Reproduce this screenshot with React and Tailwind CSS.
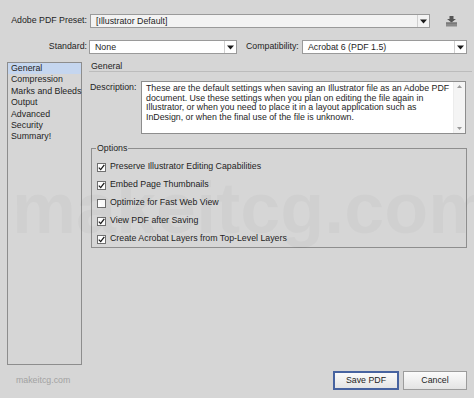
import React from "react";

const options = [
  { label: "Preserve Illustrator Editing Capabilities", checked: true },
  { label: "Embed Page Thumbnails", checked: true },
  { label: "Optimize for Fast Web View", checked: false },
  { label: "View PDF after Saving", checked: true },
  { label: "Create Acrobat Layers from Top-Level Layers", checked: true },
];

const sections = ["General", "Compression", "Marks and Bleeds", "Output", "Advanced", "Security", "Summary!"];

const description = [
  "These are the default settings when saving an Illustrator file as an Adobe PDF",
  "document. Use these settings when you plan on editing the file again in",
  "Illustrator, or when you need to place it in a layout application such as",
  "InDesign, or when the final use of the file is unknown.",
];

function Arrow() {
  return (
    <svg width="7" height="5" viewBox="0 0 7 5">
      <path d="M0 0.5 H7 L3.5 4.5 Z" fill="#1a1a1a" />
    </svg>
  );
}

function Select({ value, className, tone = "bg-white" }) {
  return (
    <div className={`flex h-[14px] items-stretch border border-[#9a9a9a] ${tone} ${className}`}>
      <span className="flex-1 pl-[5px] leading-[12px]">{value}</span>
      <span className="flex w-[12px] items-center justify-center border-l border-[#d0d0d0]">
        <Arrow />
      </span>
    </div>
  );
}

function Check({ checked }) {
  return (
    <span className="flex h-[9px] w-[9px] shrink-0 items-center justify-center border border-[#6f6f6f] bg-white">
      {checked && (
        <svg width="7" height="7" viewBox="0 0 7 7">
          <path d="M0.8 3.6 L2.7 5.6 L6.3 0.8" fill="none" stroke="#1a1a1a" strokeWidth="1.3" />
        </svg>
      )}
    </span>
  );
}

export default function App() {
  return (
    <div
      className="relative h-[398px] w-[474px] overflow-hidden bg-[#d6d6d6] text-[8.8px] text-[#1e1e1e]"
      style={{ fontFamily: '"Liberation Sans", Arial, sans-serif' }}
    >
      {/* watermark */}
      <div className="pointer-events-none absolute left-[12px] top-[168px] whitespace-nowrap text-[72px] font-bold leading-[80px] text-black/[0.025]">
        makeitcg.com
      </div>

      {/* Preset row */}
      <div className="flex items-center pt-[14px]">
        <span className="w-[87px] text-right">Adobe PDF Preset:</span>
        <Select value="[Illustrator Default]" className="ml-[3px] w-[340px]" tone="bg-[#f3f3f3]" />
        <svg className="ml-[16px]" width="11" height="11" viewBox="0 0 11 11">
          <path d="M3.5 0 H7.5 V3 H10 L5.5 6.5 L1 3 H3.5 Z" fill="#555" />
          <rect x="0" y="6.5" width="11" height="4" fill="#8a8a8a" />
          <rect x="0" y="6.5" width="11" height="1" fill="#6a6a6a" />
        </svg>
      </div>

      {/* Standard row */}
      <div className="mt-[12px] flex items-center">
        <span className="w-[87px] text-right">Standard:</span>
        <Select value="None" className="ml-[2px] w-[148px]" />
        <span className="ml-[9px] w-[56px]">Compatibility:</span>
        <Select value="Acrobat 6 (PDF 1.5)" className="w-[165px]" />
      </div>

      {/* Body */}
      <div className="mt-[8px] flex">
        <div className="ml-[7px] h-[303px] w-[75px] border border-[#8d8d8d]">
          {sections.map((s, i) => (
            <div
              key={s}
              className={`h-[11.4px] whitespace-nowrap pl-[3px] leading-[11.4px] ${i === 0 ? "bg-[#c5d6ef]" : ""}`}
            >
              {s}
            </div>
          ))}
        </div>

        <div className="ml-[7px] w-[383px]">
          <div className="h-[10px] border-b border-[#bcbcbc] pl-[2px] leading-[9px]">General</div>

          <div className="mt-[9px] flex">
            <span className="w-[52px] pl-[1px] pt-[1px] leading-[10px]">Description:</span>
            <div className="flex h-[53px] w-[325px] border border-[#8d8d8d] bg-white">
              <div className="flex-1 overflow-hidden whitespace-nowrap pl-[4px] pt-[2px] leading-[9.6px]">
                {description.map((line) => (
                  <div key={line}>{line}</div>
                ))}
              </div>
              <div className="flex w-[12px] shrink-0 flex-col items-center justify-between border-l border-[#ececec] bg-[#f4f4f4] py-[3px]">
                <svg width="5" height="3" viewBox="0 0 5 3">
                  <path d="M0 3 L2.5 0 L5 3 Z" fill="#9a9a9a" />
                </svg>
                <svg width="5" height="3" viewBox="0 0 5 3">
                  <path d="M0 0 L2.5 3 L5 0 Z" fill="#9a9a9a" />
                </svg>
              </div>
            </div>
          </div>

          <fieldset className="ml-[2px] mt-[8px] h-[106px] w-[376px] border border-[#8e8e8e] px-[5px] pb-0">
            <legend className="ml-[-1px] px-[1px] leading-[12px]">Options</legend>
            <div className="mt-[4px] flex flex-col">
              {options.map((o) => (
                <label key={o.label} className="flex h-[18px] items-center gap-[4px]">
                  <Check checked={o.checked} />
                  <span className="whitespace-nowrap">{o.label}</span>
                </label>
              ))}
            </div>
          </fieldset>
        </div>
      </div>

      {/* Footer */}
      <div className="mt-[6px] flex items-center">
        <span className="ml-[16px] text-[#a2a2a2]">makeitcg.com</span>
        <div className="ml-auto mr-[7px] flex gap-[4px]">
          <button className="h-[19px] w-[66px] border-2 border-[#4763a0] bg-gradient-to-b from-[#fbfbfb] to-[#e4e4e4]">
            Save PDF
          </button>
          <button className="h-[19px] w-[64px] border border-[#9c9c9c] bg-gradient-to-b from-[#fbfbfb] to-[#e4e4e4]">
            Cancel
          </button>
        </div>
      </div>
    </div>
  );
}
